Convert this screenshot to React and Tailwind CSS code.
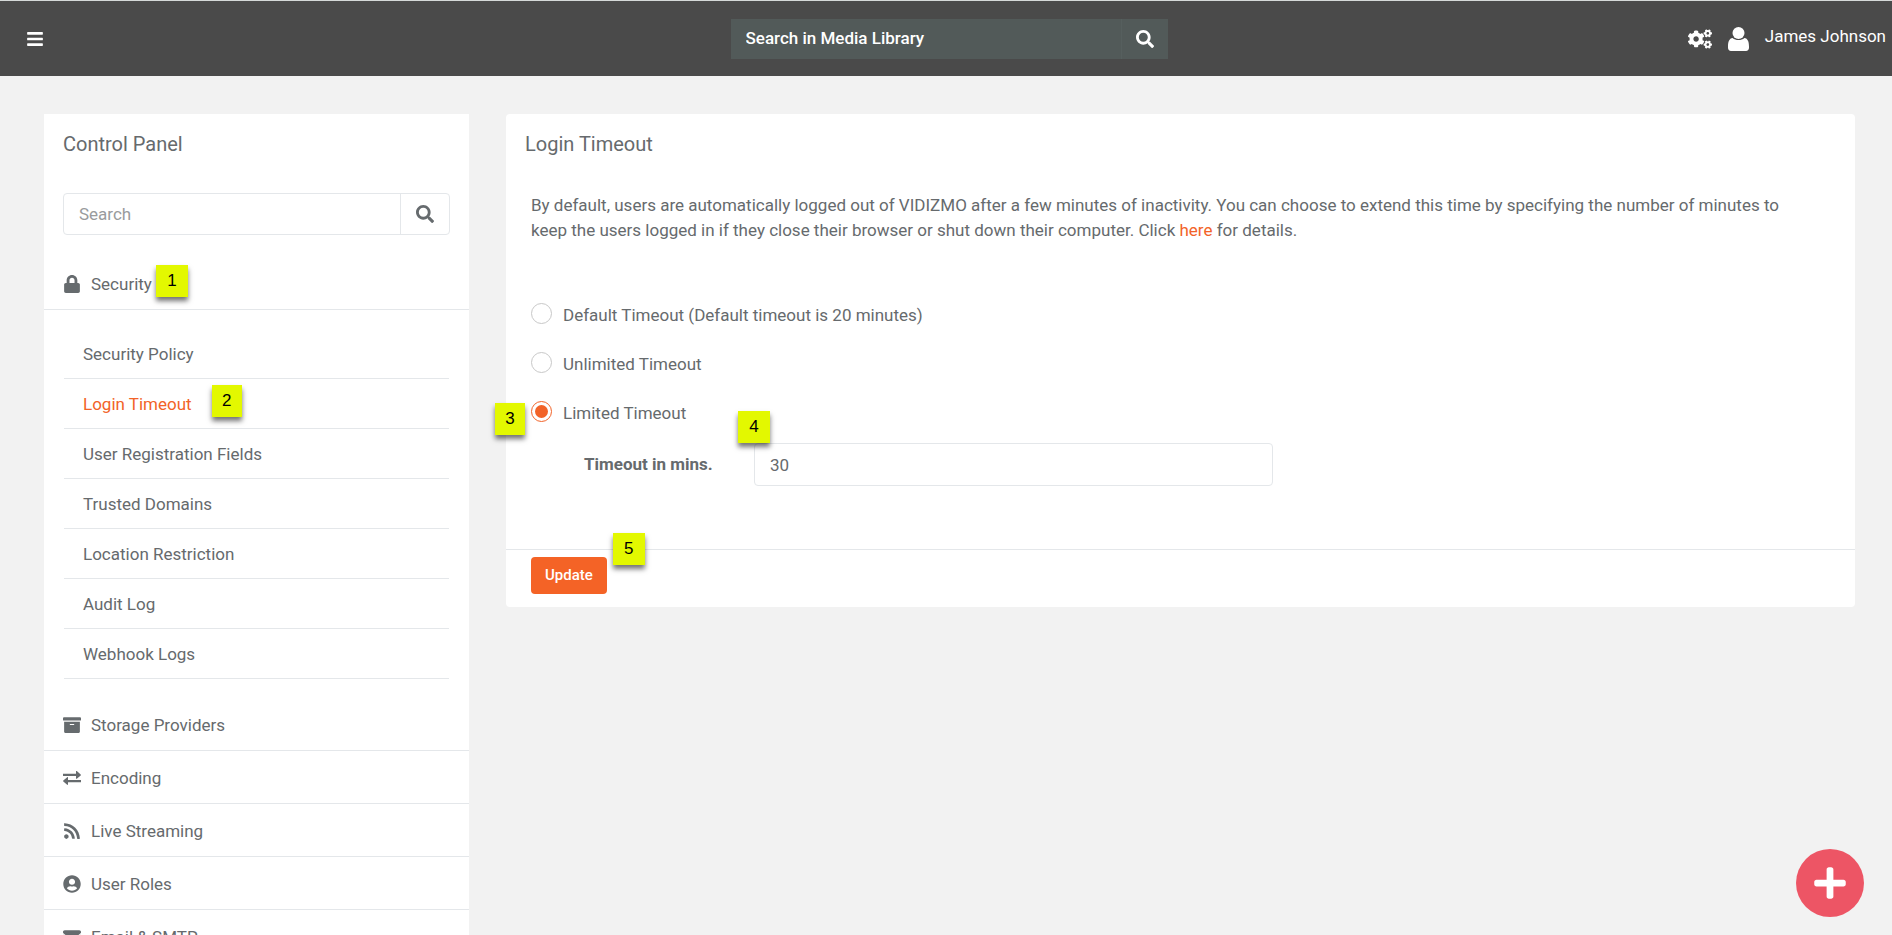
import { useState } from "react";
import { clsx } from "clsx";
import {
   FaBars,
   FaSearch,
   FaLock,
   FaArchive,
   FaRss,
   FaUserCircle,
   FaEnvelope,
   FaPlus,
   FaCogs,
} from "react-icons/fa";

const securityLinks = [
   "Security Policy",
   "Login Timeout",
   "User Registration Fields",
   "Trusted Domains",
   "Location Restriction",
   "Audit Log",
   "Webhook Logs",
];

function ExchangeIcon({ className }) {
   return (
      <svg viewBox="0 0 18 14" fill="currentColor" className={className} aria-hidden="true">
         <path d="M0 2.8h13V.4c0-.4.5-.6.8-.3l3.9 3.4c.3.3.3.7 0 1l-3.9 3.2c-.3.3-.8.1-.8-.3V5H0z" />
         <path d="M18 11.2H5v2.3c0 .4-.5.6-.8.3L.3 10.6c-.3-.3-.3-.7 0-1l3.9-3.4c.3-.3.8-.1.8.3V9h13z" />
      </svg>
   );
}

function PersonIcon({ className }) {
   return (
      <svg viewBox="0 0 21 24" fill="currentColor" className={className} aria-hidden="true">
         <circle cx="10.5" cy="6" r="6" />
         <path d="M4.6 10.9C1.2 11.4 0 14.6 0 19.4v1.4C0 22.700 1.200 24 3 24h15c1.800 0 3-1.300 3-3.200v-1.400c0-4.800-1.200-8-4.600-8.500-1.600 1.400-3.600 2.200-5.900 2.200s-4.300-.8-5.900-2.200z" />
      </svg>
   );
}

const sections = [
   { name: "Storage Providers", icon: FaArchive },
   { name: "Encoding", icon: ExchangeIcon },
   { name: "Live Streaming", icon: FaRss },
   { name: "User Roles", icon: FaUserCircle },
   { name: "Email & SMTP", icon: FaEnvelope },
];

function StepBadge({ children, className }) {
   return (
      <span
         className={clsx(
            "absolute z-10 flex h-8 justify-center bg-[#e3f800] pt-1 font-['Liberation_Sans',sans-serif] leading-6 font-normal text-black shadow-[0_4px_5px_rgba(0,0,0,0.55)]",
            className
         )}
      >
         {children}
      </span>
   );
}

function Header() {
   return (
      <header className="grid h-[76px] grid-cols-[1fr_auto_1fr] items-center border-t border-[#d5d9d8] bg-[#4a4a4a] pr-1.5 pl-3 text-white">
         <div>
            <button type="button" aria-label="Menu" className="px-3.5 py-2">
               <FaBars className="h-[18px] w-[18px]" />
            </button>
         </div>

         <form className="flex h-10 w-[437px] bg-[#525a59]" onSubmit={(e) => e.preventDefault()}>
            <input
               type="text"
               aria-label="Search in Media Library"
               placeholder="Search in Media Library"
               className="min-w-0 flex-1 px-[15px] font-medium placeholder-white outline-none"
            />
            <button type="submit" aria-label="Search" className="flex w-[47px] items-center justify-center border-l border-[#565f5e]">
               <FaSearch className="h-[18px] w-[18px]" />
            </button>
         </form>

         <div className="flex items-center justify-end">
            <button type="button" aria-label="Settings" className="mr-4">
               <FaCogs className="h-6 w-6" />
            </button>
            <a href="#profile" className="flex items-center gap-4">
               <PersonIcon className="h-6 w-[21px]" />
               <span className="pb-1">James Johnson</span>
            </a>
         </div>
      </header>
   );
}

function SectionLink({ name, icon: Icon, children }) {
   return (
      <div className="flex h-[53px] items-center border-b border-[#e4e7ea] px-[19px] pt-0.5">
         <a href="#section" className="relative flex items-center gap-2.5">
            <Icon className="h-[18px] w-[18px] text-[#666b6e]" />
            {name}
            {children}
         </a>
      </div>
   );
}

function Sidebar() {
   return (
      <aside className="w-[425px] shrink-0 bg-white">
         <h2 className="px-[19px] pt-4 text-xl leading-7">Control Panel</h2>

         <form className="mx-[19px] mt-[35px] mb-[22px] flex h-[42px] rounded border border-[#e4e7ea]" onSubmit={(e) => e.preventDefault()}>
            <input
               type="text"
               aria-label="Search control panel"
               placeholder="Search"
               className="min-w-0 flex-1 px-[15px] placeholder-[#999b9d] outline-none"
            />
            <button type="submit" aria-label="Search" className="flex w-[49px] items-center justify-center border-l border-[#e4e7ea]">
               <FaSearch className="h-[18px] w-[18px] text-[#666b6e]" />
            </button>
         </form>

         <nav>
            <SectionLink name="Security" icon={FaLock}>
               <StepBadge className="-top-1.5 left-full ml-1 w-8">1</StepBadge>
            </SectionLink>
            <ul className="mx-5 my-[19px]">
               {securityLinks.map((link) => (
                  <li key={link} className="flex h-[50px] items-center border-b border-[#e4e7ea] px-[19px] pt-0.5">
                     <a href="#link" className={clsx("relative", link === "Login Timeout" && "text-[#f26328]")}>
                        {link}
                        {link === "Login Timeout" && <StepBadge className="-top-1.5 left-full ml-5 w-[30px]">2</StepBadge>}
                     </a>
                  </li>
               ))}
            </ul>
            {sections.map((section) => (
               <SectionLink key={section.name} name={section.name} icon={section.icon} />
            ))}
         </nav>
      </aside>
   );
}

function TimeoutOption({ label, value, selected, onSelect, children }) {
   return (
      <label className="relative flex w-fit items-start gap-[11px] leading-7">
         <input
            type="radio"
            name="timeout"
            value={value}
            checked={selected === value}
            onChange={() => onSelect(value)}
            className="mt-0.5 h-[21px] w-[21px] appearance-none rounded-full border border-[#c8c8c8] bg-white bg-clip-content p-[3px] checked:border-[#f26328] checked:bg-[#f26328]"
         />
         {label}
         {children}
      </label>
   );
}

function LoginTimeout() {
   const [timeout, setTimeoutType] = useState("limited");
   const [minutes, setMinutes] = useState("30");

   return (
      <main className="min-w-0 flex-1 rounded-sm bg-white">
         <h1 className="px-[19px] pt-4 text-xl leading-7">Login Timeout</h1>

         <form onSubmit={(e) => e.preventDefault()}>
            <div className="px-[25px] pt-[35px] pb-[63px]">
               <p className="pr-4 leading-[25px]">
                  By default, users are automatically logged out of VIDIZMO after a few minutes of inactivity. You can
                  choose to extend this time by specifying the number of minutes to keep the users logged in if they
                  close their browser or shut down their computer. Click{" "}
                  <a href="#details" className="text-[#f26328]">here</a> for details.
               </p>

               <div className="mt-[58px] flex flex-col gap-[21px]">
                  <TimeoutOption label="Default Timeout (Default timeout is 20 minutes)" value="default" selected={timeout} onSelect={setTimeoutType} />
                  <TimeoutOption label="Unlimited Timeout" value="unlimited" selected={timeout} onSelect={setTimeoutType} />
                  <TimeoutOption label="Limited Timeout" value="limited" selected={timeout} onSelect={setTimeoutType}>
                     <StepBadge className="top-1 right-full mr-1.5 w-[30px]">3</StepBadge>
                  </TimeoutOption>
               </div>

               <div className="mt-4 flex items-center pl-[53px]">
                  <label htmlFor="minutes" className="w-[170px] font-bold">Timeout in mins.</label>
                  <div className="relative w-full max-w-[519px]">
                     <input
                        id="minutes"
                        type="text"
                        value={minutes}
                        onChange={(e) => setMinutes(e.target.value)}
                        className="h-[43px] w-full rounded border border-[#e4e7ea] px-[15px] outline-none"
                     />
                     <StepBadge className="-top-8 -left-4 w-8">4</StepBadge>
                  </div>
               </div>
            </div>

            <div className="border-t border-[#e4e7ea] px-[25px] pt-[7px] pb-[13px]">
               <div className="relative w-fit">
                  <button type="submit" className="h-[37px] rounded bg-[#f46326] px-3.5 text-[15px] font-medium text-white">
                     Update
                  </button>
                  <StepBadge className="-top-6 left-full ml-1.5 w-8">5</StepBadge>
               </div>
            </div>
         </form>
      </main>
   );
}

export default function App() {
   return (
      <div className="h-screen overflow-hidden bg-[#f2f2f2] font-[Roboto,sans-serif] text-[17px] leading-[27px] text-[#666a6d]">
         <Header />
         <div className="flex items-start gap-[37px] py-[38px] pr-[37px] pl-11">
            <Sidebar />
            <LoginTimeout />
         </div>

         <button
            type="button"
            aria-label="Add"
            className="fixed right-7 bottom-[18px] flex h-[68px] w-[68px] items-center justify-center rounded-full bg-[#ed5565] text-white"
         >
            <FaPlus className="h-9 w-9" />
         </button>
      </div>
   );
}
